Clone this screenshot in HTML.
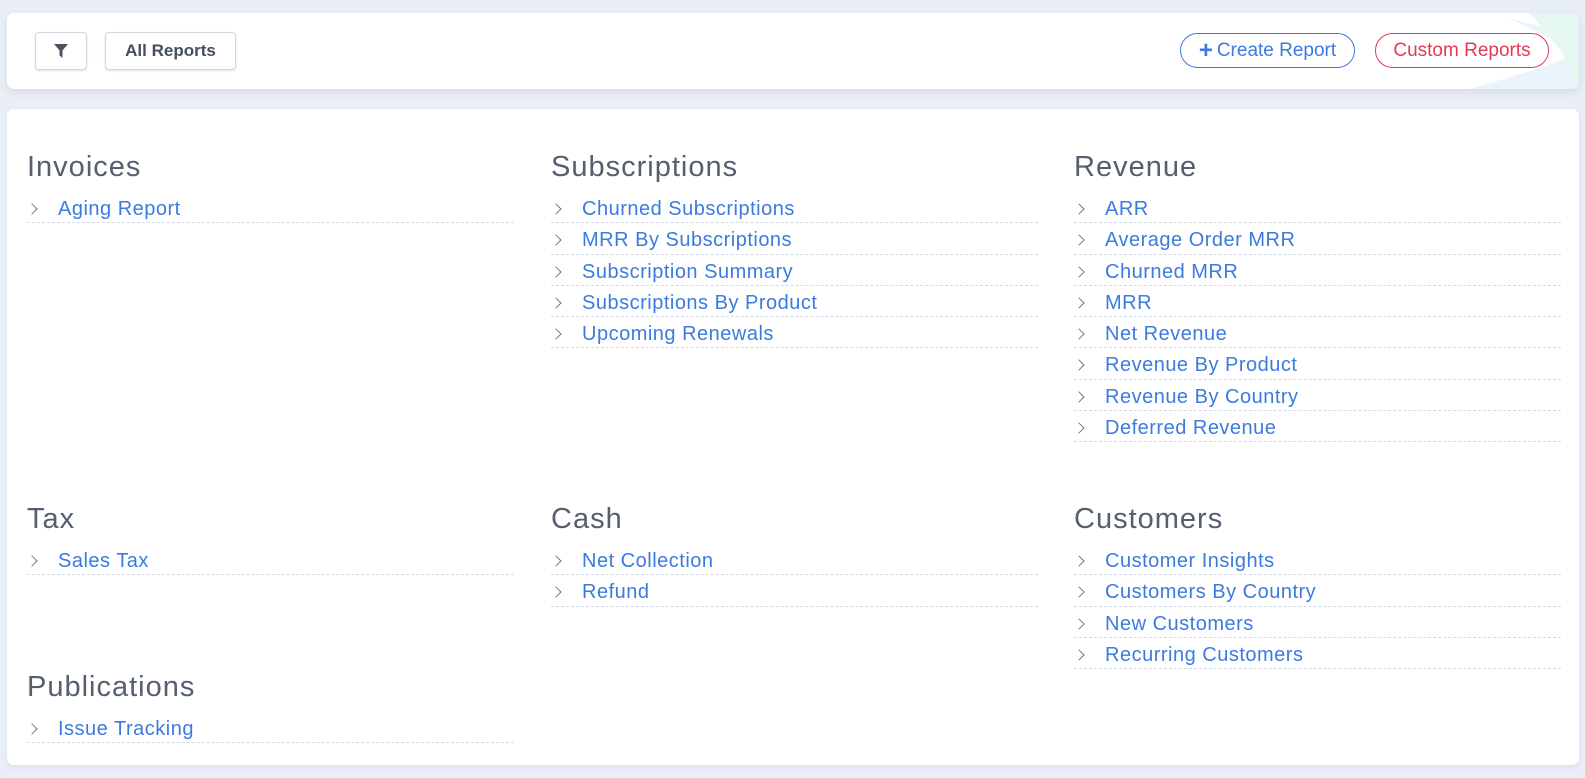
<!DOCTYPE html>
<html><head><meta charset="utf-8"><style>
*{box-sizing:border-box;margin:0;padding:0}
body{width:1585px;height:778px;background:#eaeef6;font-family:"Liberation Sans",sans-serif;position:relative;overflow:hidden}
.top{position:absolute;left:7px;top:13px;width:1572px;height:76px;background:#fff;border-radius:7px;box-shadow:0 3px 8px rgba(60,70,100,.12);overflow:hidden}
.btn{position:absolute;top:19px;height:38px;border:1px solid #d4d6da;border-radius:4px;background:#fff;box-shadow:0 1px 2px rgba(0,0,0,.12);font-weight:bold;font-size:17px;color:#454e5c;display:flex;align-items:center;justify-content:center}
.pill{position:absolute;top:20px;height:35px;border-radius:18px;font-size:19px;display:flex;align-items:center;justify-content:center}
.main{position:absolute;left:7px;top:109px;width:1572px;height:656px;background:#fff;border-radius:7px;box-shadow:0 2px 6px rgba(60,70,100,.08)}
.sec{position:absolute;width:487px}
.sec h2{font-weight:normal;font-size:29px;color:#555f6d;height:43px;line-height:36px;letter-spacing:1px}
.sec div{height:31.3px;border-bottom:1px dashed #d3dbe8;font-size:20px;color:#3b7be0;line-height:34px;padding-left:31px;position:relative;letter-spacing:.5px}
.sec div:before{content:"";position:absolute;left:1px;top:13px;width:7px;height:7px;border-right:1.2px solid #777;border-top:1.2px solid #777;transform:rotate(45deg)}
</style></head><body>
<div class="top">
<svg style="position:absolute;right:0;top:0" width="110" height="76"><path d="M30 0 Q70 20 110 10 V76 H0 Q60 60 110 40" fill="#eaf4fc"/><path d="M60 0 Q90 30 110 70 V0Z" fill="#e4f8f1"/></svg>
<div class="btn" style="left:28px;width:52px"><svg width="16" height="16" viewBox="0 0 16 16"><path d="M1 1h14l-5.5 6.5V15L6.5 12.5V7.5Z" fill="#4a5361"/></svg></div>
<div class="btn" style="left:98px;width:131px">All Reports</div>
<div class="pill" style="left:1173px;width:175px;border:1px solid #3b7be0;color:#3b7be0"><b style="font-size:24px;margin-right:4px">+</b>Create Report</div>
<div class="pill" style="left:1368px;width:174px;border:1px solid #e23a55;color:#e23a55">Custom Reports</div>
</div>
<div class="main">
<div class="sec" style="left:20px;top:40px"><h2>Invoices</h2><div>Aging Report</div></div>
<div class="sec" style="left:544px;top:40px"><h2>Subscriptions</h2><div>Churned Subscriptions</div><div>MRR By Subscriptions</div><div>Subscription Summary</div><div>Subscriptions By Product</div><div>Upcoming Renewals</div></div>
<div class="sec" style="left:1067px;top:40px"><h2>Revenue</h2><div>ARR</div><div>Average Order MRR</div><div>Churned MRR</div><div>MRR</div><div>Net Revenue</div><div>Revenue By Product</div><div>Revenue By Country</div><div>Deferred Revenue</div></div>
<div class="sec" style="left:20px;top:392px"><h2>Tax</h2><div>Sales Tax</div></div>
<div class="sec" style="left:544px;top:392px"><h2>Cash</h2><div>Net Collection</div><div>Refund</div></div>
<div class="sec" style="left:1067px;top:392px"><h2>Customers</h2><div>Customer Insights</div><div>Customers By Country</div><div>New Customers</div><div>Recurring Customers</div></div>
<div class="sec" style="left:20px;top:560px"><h2>Publications</h2><div>Issue Tracking</div></div>
</div>
</body></html>
